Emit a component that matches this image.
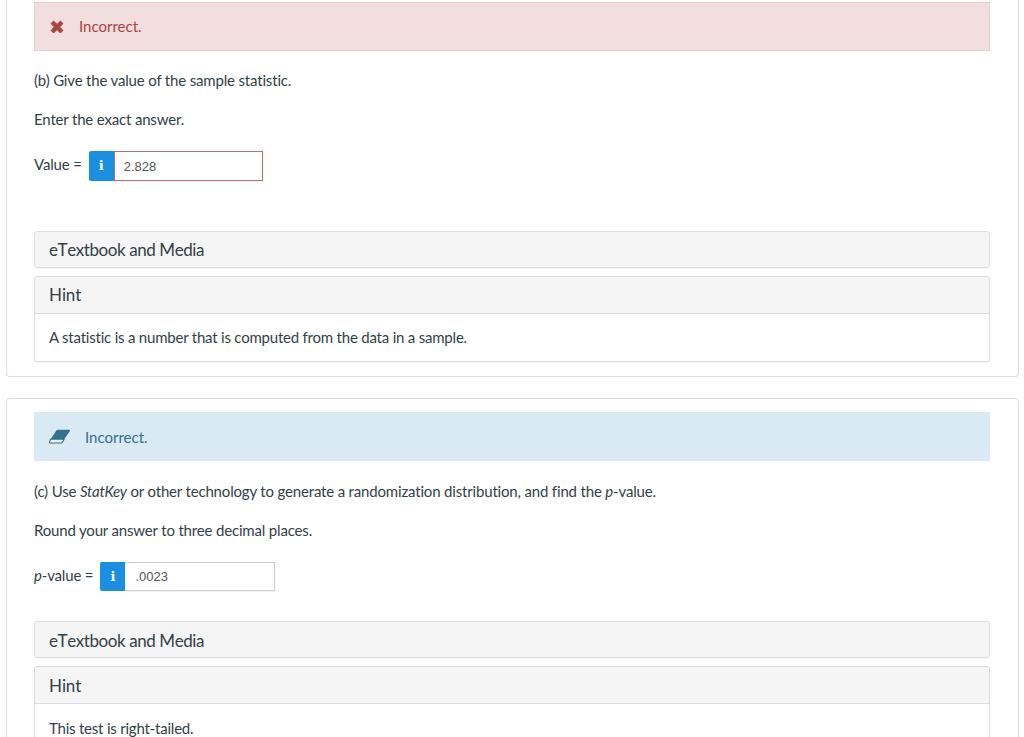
<div class="page">
  <section class="card first">
    <div class="alert danger">
      <svg class="ico" width="14" height="14" viewBox="0 0 14 14"><path d="M1 3.6 3.6 1 7 4.4 10.4 1 13 3.6 9.6 7 13 10.4 10.4 13 7 9.6 3.6 13 1 10.4 4.4 7Z" fill="#a94442" stroke="#a94442" stroke-width="1" stroke-linejoin="round"/></svg>
      <span class="t1">Incorrect.</span>
    </div>
    <p class="q b">(b) Give the value of the sample statistic.</p>
    <p class="q next">Enter the exact answer.</p>
    <div class="field">
      <span class="lab">Value =</span>
      <span class="info">i</span>
      <span class="inp bad">2.828</span>
    </div>
    <div class="panel media wide"><div class="head">eTextbook and Media</div></div>
    <div class="panel hint">
      <div class="head line">Hint</div>
      <div class="body">A statistic is a number that is computed from the data in a sample.</div>
    </div>
  </section>

  <section class="card second">
    <div class="alert blue">
      <svg class="ico2" width="22" height="15" viewBox="0 0 22 15"><path d="M1.6 10.2 7.4 1.6Q7.9.8 8.8.8H20Q21.6.8 20.9 2L15.2 10.2Z" fill="#31708f"/><path d="M1.6 10.2H15.2L13.4 13.1Q12.9 14 12 14H1.6Q.1 14 .7 12.6Z" fill="#eef6fb" stroke="#31708f" stroke-width="1.1" stroke-linejoin="round"/></svg>
      <span class="t2">Incorrect.</span>
    </div>
    <p class="q c">(c) Use <em>StatKey</em> or other technology to generate a randomization distribution, and find the <em>p</em>-value.</p>
    <p class="q next">Round your answer to three decimal places.</p>
    <div class="field short">
      <span class="lab"><em>p</em>-value =</span>
      <span class="info">i</span>
      <span class="inp">.0023</span>
    </div>
    <div class="panel media"><div class="head">eTextbook and Media</div></div>
    <div class="panel hint">
      <div class="head line">Hint</div>
      <div class="body">This test is right-tailed.</div>
    </div>
  </section>
</div>

<style>
  :global(body) { margin: 0; background: #fff; }
  .page {
    height: 737px;
    overflow: hidden;
    padding: 0 5px 0 6px;
    font-family: Lato, "Open Sans", sans-serif;
    font-size: 15px;
    letter-spacing: -0.17px;
    line-height: 20px;
    color: #333f48;
  }
  .card {
    border: 1px solid #ddd;
    border-radius: 4px;
    padding: 13px 28px 14px 27px;
    background: #fff;
  }
  .first {
    border-top: 0;
    border-top-left-radius: 0;
    border-top-right-radius: 0;
    padding-top: 2px;
    margin-bottom: 21px;
  }
  .alert {
    height: 49px;
    box-sizing: border-box;
    display: flex;
    align-items: center;
    letter-spacing: 0;
  }
  .danger {
    background: #f2dede;
    border: 1px solid #ebccd1;
    color: #a94442;
    padding-left: 15px;
  }
  .t1 { padding-bottom: 2px; }
  .blue {
    background: #d9eaf4;
    color: #31708f;
    padding-left: 15px;
  }
  .ico { margin-right: 15px; }
  .ico2 { margin-right: 14px; }
  .q { margin: 0; }
  .b { margin-top: 19px; }
  .c { margin-top: 20px; }
  .next { margin-top: 19px; }
  .field {
    display: flex;
    align-items: center;
    margin-top: 22px;
    height: 30px;
  }
  .field.short { height: 29px; }
  .lab { margin-right: 7px; padding-bottom: 4px; }
  .info {
    width: 25px;
    height: 100%;
    background: #1a8fe0;
    color: #fff;
    font-family: "DejaVu Serif", serif;
    font-weight: 700;
    font-size: 13px;
    display: flex;
    align-items: center;
    justify-content: center;
    border-radius: 2px 0 0 2px;
  }
  .inp {
    width: 150px;
    height: 100%;
    box-sizing: border-box;
    border: 1px solid #ccc;
    border-left: 0;
    padding-left: 10px;
    font-family: "Liberation Sans", Arial, sans-serif;
    font-size: 13px;
    letter-spacing: 0;
    line-height: 28px;
    color: #555;
    box-shadow: 0 1px 1px rgba(0, 0, 0, 0.05);
  }
  .inp.bad {
    width: 149px;
    border: 1px solid #c06a6c;
    padding-left: 9px;
    line-height: 29px;
  }
  .panel {
    border: 1px solid #ddd;
    border-radius: 3px;
    background: #fff;
    box-shadow: 0 1px 1px rgba(0, 0, 0, 0.05);
  }
  .media { margin-top: 30px; }
  .media.wide { margin-top: 50px; }
  .hint { margin-top: 8px; }
  .head {
    background: #f5f5f5;
    padding: 8px 14px 7px;
    height: 35px;
    box-sizing: border-box;
    font-size: 17px;
    font-kerning: none;
    letter-spacing: -0.42px;
    border-radius: 3px;
  }
  .second .head { padding-top: 9px; padding-bottom: 6px; }
  .line {
    height: 37px;
    border-bottom: 1px solid #ddd;
    border-radius: 3px 3px 0 0;
    letter-spacing: -0.1px;
  }
  .body { padding: 13px 14px 14px; letter-spacing: -0.21px; }
  .second .body { padding-top: 14px; }
</style>
